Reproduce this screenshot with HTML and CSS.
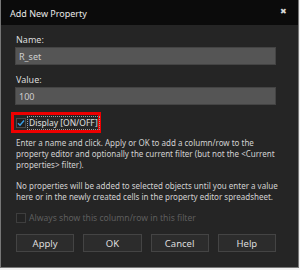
FILE: index.html
```html
<!DOCTYPE html>
<html lang="en">
<head>
    <meta charset="UTF-8">
    <title>Add New Property</title>
    <link rel="stylesheet" href="styles.css">
</head>
<body>
<div class="window">
    <div class="titlebar">
        <span class="title">Add New Property</span>
        <span class="close">&#x2716;</span>
    </div>
    <div class="content">
        <label class="field-label" for="name">Name:</label>
        <input class="field" id="name" type="text" value="R_set">
        <label class="field-label" for="value">Value:</label>
        <input class="field" id="value" type="text" value="100">
        <div class="highlight">
            <span class="check checked">
                <svg width="8" height="8" viewBox="0 0 8 8"><path d="M1 4.2 L3 6.2 L7 1.5" fill="none" stroke="#3aa0e8" stroke-width="1.4"/></svg>
            </span>
            <span class="focus">Display [ON/OFF]</span>
        </div>
        <p class="note">Enter a name and click. Apply or OK to add a column/row to the<br>property editor and optionally the current filter (but not the &lt;Current<br>properties&gt; filter).</p>
        <p class="note second">No properties will be added to selected objects until you enter a value<br>here or in the newly created cells in the property editor spreadsheet.</p>
        <div class="option disabled">
            <span class="check"></span>
            <span>Always show this column/row in this filter</span>
        </div>
        <div class="buttons">
            <button>Apply</button>
            <button>OK</button>
            <button>Cancel</button>
            <button>Help</button>
        </div>
    </div>
</div>
</body>
</html>
```
FILE: styles.css
```css
* {
    box-sizing: border-box;
    font-family: 'Noto Sans', sans-serif;
}

body {
    margin: 0;
    background-color: #f0f0f0;
}

.window {
    width: 299px;
    height: 268px;
    border: 1px solid #777777;
    border-top: none;
    background-color: #252525;
    overflow: hidden;
}

.titlebar {
    height: 25px;
    background-color: #0b0b0b;
    display: flex;
    align-items: center;
    justify-content: space-between;
    padding: 2px 11px 0 9px;
}

.title {
    color: #e8e8e8;
    font-size: 9px;
}

.close {
    color: #d8d8d8;
    font-size: 8px;
    margin-top: -6px;
}

.content {
    padding: 9px 22px 0 14px;
    display: flex;
    flex-direction: column;
}

.field-label {
    color: #dcdcdc;
    font-size: 9px;
    line-height: 12px;
    margin-left: 1px;
}

.field {
    width: 261px;
    height: 18px;
    margin: 1px 0 9px;
    background-color: #555555;
    border: 1px solid #444444;
    color: #cfcfcf;
    font-size: 9px;
    padding: 0 3px;
    outline: none;
}

.highlight {
    margin: -2px 0 0 -4px;
    width: 90px;
    height: 21px;
    border: 3px solid #ee0000;
    display: flex;
    align-items: center;
    gap: 1px;
    padding-left: 2px;
}

.check {
    width: 10px;
    height: 10px;
    border: 1px solid #4a4a4a;
    background-color: #1e1e1e;
    display: flex;
    align-items: center;
    justify-content: center;
    flex-shrink: 0;
}

.focus {
    color: #e0e0e0;
    font-size: 8.5px;
    line-height: 12px;
    border: 1px dotted #9a9a9a;
    padding: 0 1px;
    white-space: nowrap;
}

.note {
    margin: 4px 0 0 1px;
    color: #d2d2d2;
    font-size: 8px;
    line-height: 11px;
    white-space: nowrap;
}

.note.second {
    margin-top: 10px;
}

.option {
    display: flex;
    align-items: center;
    gap: 3px;
    margin: 10px 0 0 1px;
    font-size: 8.6px;
}

.option.disabled {
    color: #5e5e5e;
}

.option.disabled .check {
    border-color: #3e3e3e;
    background-color: #232323;
}

.buttons {
    display: flex;
    gap: 9px;
    margin-top: 10px;
    margin-left: 1px;
}

button {
    width: 60px;
    height: 18px;
    background-color: #2c2c2c;
    border: 1px solid #444444;
    color: #dedede;
    font-size: 9.5px;
    padding: 0;
}
```
